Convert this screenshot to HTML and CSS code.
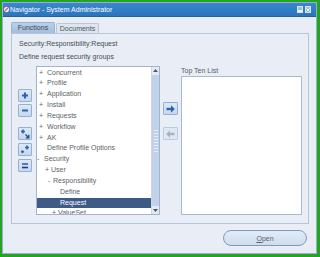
FILE: index.html
```html
<!DOCTYPE html>
<html>
<head>
<meta charset="utf-8">
<link rel="stylesheet" href="styles.css">
</head>
<body>
<div class="frame">
  <div class="window">
    <div class="titlebar">
      <svg class="appicon" width="7" height="7" viewBox="0 0 14 14"><circle cx="7" cy="7" r="6.3" fill="#f4eef6" stroke="#5b2d6e" stroke-width="1.4"/><path d="M3.5 10.5 L7 7 L10.5 3.5 L8 8 Z" fill="#8a2a5a"/><path d="M3.5 10.5 L6 6 L10.5 3.5" fill="none" stroke="#5b2d6e" stroke-width="1.2"/></svg>
      <span class="title">Navigator - System Administrator</span>
      <div class="wbtns"><span class="wbtn wmin"></span><span class="wbtn wclose"><svg width="4" height="4" viewBox="0 0 4 4"><path d="M0.5 0.5L3.5 3.5M3.5 0.5L0.5 3.5" stroke="#fff" stroke-width="1"/></svg></span></div>
    </div>
    <div class="body">
      <div class="tabs">
        <div class="tab tab-active">Functions</div>
        <div class="tab tab-idle">Documents</div>
      </div>
      <div class="panel">
        <div class="line path">Security:Responsibility:Request</div>
        <div class="line desc">Define request security groups</div>
        <div class="main">
          <div class="tools">
            <span class="tbtn"><svg width="12" height="11" viewBox="0 0 12 11"><path d="M6 2.5v6M3 5.5h6" stroke="#2d62ad" stroke-width="2"/></svg></span>
            <span class="tbtn g2"><svg width="12" height="11" viewBox="0 0 12 11"><path d="M3 5.5h6" stroke="#2d62ad" stroke-width="2"/></svg></span>
            <span class="tbtn g10"><svg width="12" height="11" viewBox="0 0 12 11"><path d="M4 1.5v4M2 3.5h4" stroke="#2d62ad" stroke-width="1.6"/><path d="M6.5 6.5l3 3M9.8 6.8v3h-3" fill="none" stroke="#1f4f95" stroke-width="1.3"/></svg></span>
            <span class="tbtn g3"><svg width="12" height="11" viewBox="0 0 12 11"><path d="M8 1.5v4M6 3.5h4" stroke="#2d62ad" stroke-width="1.6"/><path d="M3.5 6l1.8 1.8L3.5 9.6 1.7 7.8Z" fill="#2d62ad"/></svg></span>
            <span class="tbtn g3"><svg width="12" height="11" viewBox="0 0 12 11"><path d="M3 4h6" stroke="#2d62ad" stroke-width="1.6"/><path d="M3 7.5h6" stroke="#1c3f75" stroke-width="1.6"/></svg></span>
          </div>
          <div class="tree">
            <div class="rows">
              <div class="row"><span class="mk m1">+</span>Concurrent</div>
              <div class="row"><span class="mk m1">+</span>Profile</div>
              <div class="row"><span class="mk m1">+</span>Application</div>
              <div class="row"><span class="mk m1">+</span>Install</div>
              <div class="row"><span class="mk m1">+</span>Requests</div>
              <div class="row"><span class="mk m1">+</span>Workflow</div>
              <div class="row"><span class="mk m1">+</span>AK</div>
              <div class="row leaf1">Define Profile Options</div>
              <div class="row"><span class="mk m0">-</span>Security</div>
              <div class="row"><span class="mk m2">+</span>User</div>
              <div class="row"><span class="mk m3">-</span>Responsibility</div>
              <div class="row leaf4">Define</div>
              <div class="row leaf4 selected">Request</div>
              <div class="row"><span class="mk m4">+</span>ValueSet</div>
            </div>
            <div class="vscroll">
              <span class="sarrow"><svg width="5" height="3" viewBox="0 0 5 3"><path d="M0 3h5L2.5 0Z" fill="#556"/></svg></span>
              <span class="thumb"><span class="grip"></span></span>
              <span class="sarrow"><svg width="5" height="3" viewBox="0 0 5 3"><path d="M0 0h5L2.5 3Z" fill="#556"/></svg></span>
            </div>
          </div>
          <div class="moves">
            <span class="mbtn"><svg width="13" height="12" viewBox="0 0 13 12"><path d="M2.5 6h5" stroke="#2d62ad" stroke-width="2.4"/><path d="M7 2.3L10.8 6 7 9.7Z" fill="#2d62ad"/></svg></span>
            <span class="mbtn mbtn-off"><svg width="13" height="12" viewBox="0 0 13 12"><path d="M5.5 6h5" stroke="#a9b2bf" stroke-width="2.4"/><path d="M6 2.3L2.2 6 6 9.7Z" fill="#a9b2bf"/></svg></span>
          </div>
          <div class="topten">
            <div class="tt-label">Top Ten List</div>
            <div class="tt-box"></div>
          </div>
        </div>
      </div>
      <div class="actions">
        <button class="open"><u>O</u>pen</button>
      </div>
    </div>
  </div>
</div>
</body>
</html>
```
FILE: styles.css
```css
* { box-sizing: border-box; }
html, body { margin: 0; padding: 0; }
body {
  width: 320px;
  height: 257px;
  overflow: hidden;
  font-family: "Liberation Sans", Arial, sans-serif;
  font-size: 7px;
  background: #e9eef6;
}
.frame {
  width: 320px;
  height: 257px;
  border-style: solid;
  border-color: #23a423;
  border-width: 2px 3px 3px 2px;
  background: #e9eef6;
}
.window {
  height: 100%;
  border: 1px solid #9aaecb;
  background: #e9eef6;
}
.titlebar {
  height: 14px;
  display: flex;
  align-items: center;
  background: linear-gradient(#3a88cf, #2b74bc);
  border-bottom: 1px solid #22609f;
}
.appicon { display: block; margin-left: 0; margin-right: 0; }
.title { color: #fff; font-size: 7px; line-height: 13px; white-space: nowrap; }
.wbtns { margin-left: auto; margin-right: 5px; display: flex; gap: 2px; }
.wbtn {
  width: 6px; height: 7px;
  background: linear-gradient(#a9c8ea, #7eaadb);
  border: 1px solid #d6e5f5;
  display: flex; align-items: center; justify-content: center;
}
.wbtn svg { display: block; }
.wmin { box-shadow: inset 0 -2px 0 #eef5fc; }
.body { padding: 5px 7px 0 8px; }
.tabs { display: flex; align-items: flex-end; height: 11px; }
.tab {
  color: #3e4450;
  text-align: center;
  border: 1px solid #9bb1cd;
  border-bottom: none;
  border-radius: 2px 2px 0 0;
  line-height: 9px;
}
.tab-active { width: 44px; height: 11px; background: linear-gradient(#b9d0ea, #a3bfdf); line-height: 10px; }
.tab-idle { width: 43px; height: 10px; margin-left: 1px; background: #dde5ef; border-color: #b8c7da; color: #4e5460; }
.panel {
  width: 298px;
  height: 191px;
  border: 1px solid #b6c5da;
  padding: 3px 0 0 7px;
  background: #e9eef6;
}
.line { line-height: 13px; color: #474b52; white-space: nowrap; }
.main { display: flex; margin-top: 3px; height: 149px; }
.tools { width: 14px; margin-left: -1px; padding-top: 23px; display: flex; flex-direction: column; }
.tbtn, .mbtn {
  display: flex; align-items: center; justify-content: center;
  background: linear-gradient(#dde8f5, #c6d8ee);
  border: 1px solid #97b0d2;
  border-radius: 1px;
}
.tbtn { width: 14px; height: 13px; }
.tbtn svg, .mbtn svg { display: block; }
.g2 { margin-top: 2px; }
.g10 { margin-top: 10px; }
.g3 { margin-top: 3px; }
.tree {
  width: 124px;
  height: 149px;
  margin-left: 4px;
  border: 1px solid #a3b4cc;
  background: #fff;
  display: flex;
}
.rows { flex: 1; overflow: hidden; padding-top: 0.5px; }
.row { height: 10.85px; line-height: 10.85px; color: #606266; white-space: nowrap; }
.mk { display: inline-block; }
.m0 { width: 7px; padding-left: 0; }
.m1 { width: 10px; padding-left: 2px; }
.m2 { width: 14px; padding-left: 8px; }
.m3 { width: 16px; padding-left: 11px; }
.m4 { width: 21px; padding-left: 15px; }
.leaf1 { padding-left: 10px; }
.leaf4 { padding-left: 23px; }
.selected { background: #3e5b88; color: #fff; }
.vscroll {
  width: 8px;
  border-left: 1px solid #cdd8e6;
  background: #e3eaf4;
  display: flex; flex-direction: column;
}
.sarrow { height: 7px; display: flex; align-items: center; justify-content: center; }
.thumb {
  flex: 1;
  margin: 1px 0;
  background: #c0d2e9;
  display: flex; align-items: center; justify-content: center;
}
.grip {
  width: 4px; height: 22px;
  background: repeating-linear-gradient(#e8eef7 0 1px, transparent 1px 3px);
}
.moves { width: 15px; margin-left: 3px; padding-top: 36px; display: flex; flex-direction: column; }
.mbtn { width: 15px; height: 13px; }
.mbtn-off { margin-top: 12px; background: #dfe7f2; border-color: #bccbdf; }
.topten { width: 121px; margin-left: 3px; }
.tt-label { line-height: 10px; color: #555a62; }
.tt-box { height: 139px; border: 1px solid #a9b9cf; background: #fff; }
.actions { display: flex; justify-content: flex-end; margin-top: 6px; padding-right: 2px; }
.open {
  width: 84px; height: 16px;
  border-radius: 8px;
  border: 1px solid #8599b6;
  background: linear-gradient(#e2ecf8, #cedcee);
  font-family: "Liberation Sans", Arial, sans-serif;
  font-size: 7px;
  color: #5a5f68;
  padding: 0;
}
.open u { text-decoration: underline; }
```
